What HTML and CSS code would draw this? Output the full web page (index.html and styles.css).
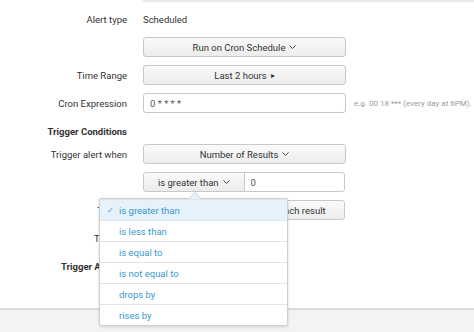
FILE: index.html
```html
<!DOCTYPE html>
<html lang="en">
<head>
<meta charset="UTF-8">
<title>Alert settings</title>
<link rel="stylesheet" href="styles.css">
</head>
<body>
<div class="topbar"></div>

<div class="form">
<div class="row"><span class="lbl">Alert type</span><span class="val">Scheduled</span></div>
<div class="row"><span class="lbl"></span><button class="btn wide">Run on Cron Schedule <svg class="chev" width="7" height="4" viewBox="0 0 7 4"><path d="M0.5 0.5 L3.5 3.5 L6.5 0.5" /></svg></button></div>
<div class="row"><span class="lbl">Time Range</span><button class="btn wide">Last 2 hours <span class="tri">&#9656;</span></button></div>
<div class="row"><span class="lbl">Cron Expression</span><input class="inp wide" type="text" value="0 * * * *"><span class="hint">e.g. 00 18 *** (every day at 6PM).</span></div>

<div class="head"><span class="lbl">Trigger Conditions</span></div>
<div class="row"><span class="lbl">Trigger alert when</span><button class="btn wide">Number of Results <svg class="chev" width="7" height="4" viewBox="0 0 7 4"><path d="M0.5 0.5 L3.5 3.5 L6.5 0.5" /></svg></button></div>
<div class="row"><span class="lbl"></span>
  <div class="group">
    <button class="btn half first">is greater than <svg class="chev" width="7" height="4" viewBox="0 0 7 4"><path d="M0.5 0.5 L3.5 3.5 L6.5 0.5" /></svg></button>
    <input class="inp half last" type="text" value="0">
  </div>
</div>
<div class="row"><span class="lbl">Trigger</span>
  <div class="group">
    <button class="btn half first">Once</button>
    <button class="btn half last">For each result</button>
  </div>
</div>
<div class="row"><span class="lbl">Throttle</span><span class="check"></span></div>
<div class="head"><span class="lbl">Trigger Actions</span></div>
</div>

<div class="footer"></div>

<div class="menu">
  <div class="arrow"></div>
  <div class="item active"><span class="tick">&#10003;</span>is greater than</div>
  <div class="item">is less than</div>
  <div class="item">is equal to</div>
  <div class="item">is not equal to</div>
  <div class="item">drops by</div>
  <div class="item">rises by</div>
</div>
</body>
</html>
```

FILE: styles.css
```css
body { margin: 0; width: 474px; height: 332px; overflow: hidden; position: relative; background: #fff; color: #333; font-family: Roboto, "Liberation Sans", sans-serif; font-size: 9.5px; }
.topbar { margin-left: 143px; height: 2px; background: #e8e8e8; }
.form { padding-top: 7px; }
.row { display: flex; align-items: center; height: 20px; margin-bottom: 8px; }
.lbl { flex: none; width: 127px; margin-right: 16px; text-align: right; white-space: nowrap; }
.head { display: flex; align-items: center; height: 20px; margin-bottom: 3px; font-weight: bold; }
.val { color: #333; }
.btn { box-sizing: border-box; height: 20px; padding: 0 6px; border: 1px solid #c8c8c8; border-radius: 3px; background: linear-gradient(#fafafa, #ececec); color: #333; font: inherit; display: flex; align-items: center; justify-content: center; gap: 4px; }
.wide { width: 203px; }
.chev { fill: none; stroke: #444; stroke-width: 1; }
.tri { font-size: 8px; }
.inp { box-sizing: border-box; height: 20px; padding: 0 6px; border: 1px solid #c8c8c8; border-radius: 3px; background: #fff; color: #555; font: inherit; outline: none; }
.hint { margin-left: 8px; font-size: 8px; color: #9a9a9a; white-space: nowrap; }
.group { display: flex; width: 203px; }
.half { width: 50%; }
.first { border-radius: 3px 0 0 3px; }
.last { border-radius: 0 3px 3px 0; margin-left: -1px; }
.check { width: 10px; height: 10px; border: 1px solid #c8c8c8; border-radius: 2px; }
.footer { margin-top: 32px; height: 30px; border-top: 2px solid #dcdcdc; background: #f3f3f3; }

.menu { position: absolute; left: 99px; top: 198px; width: 187px; background: #fff; border: 1px solid #cfcfcf; border-radius: 2px; box-shadow: 0 1px 3px rgba(0,0,0,0.15); }
.arrow { position: absolute; left: 88px; top: -7px; width: 0; height: 0; border-left: 7px solid transparent; border-right: 7px solid transparent; border-bottom: 7px solid #cfcfcf; }
.arrow::after { content: ""; position: absolute; left: -6px; top: 1px; border-left: 6px solid transparent; border-right: 6px solid transparent; border-bottom: 6px solid #e6f2fb; }
.item { display: flex; align-items: center; height: 20px; padding-left: 19px; color: #3a97cf; border-top: 1px solid #e4e4e4; position: relative; }
.item:first-of-type { border-top: none; }
.item.active { background: #e6f2fb; padding-left: 7px; }
.tick { width: 6px; margin-right: 6px; overflow: hidden; color: #5a8fb9; font-size: 8px; }
```
